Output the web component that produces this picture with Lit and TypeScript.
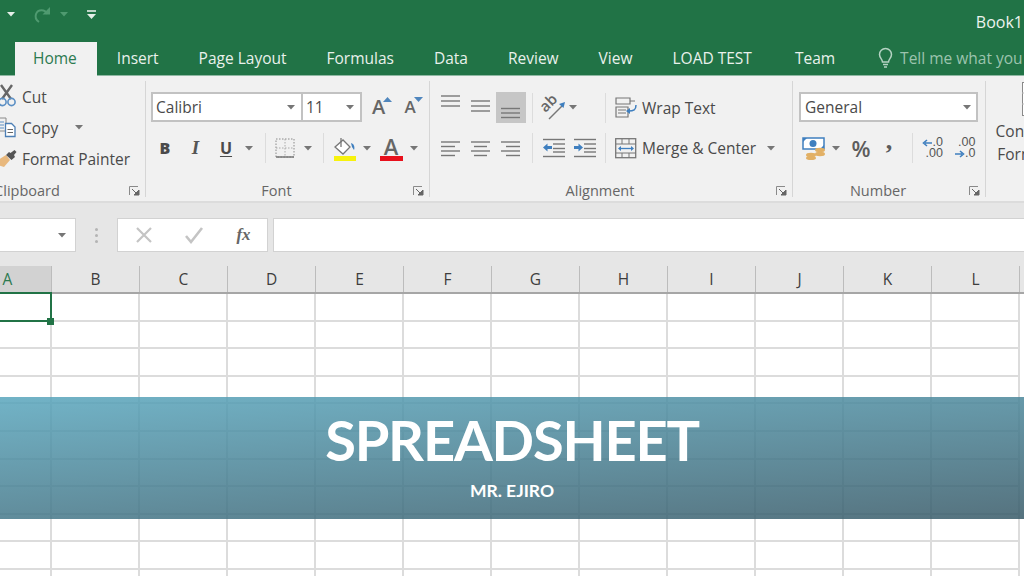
import { LitElement, html, css, svg } from "lit";
import { customElement } from "lit/decorators.js";

const dd = (c = "#767676") => html`<svg class="dd" width="8" height="4.500" viewBox="0 0 9 5"><polygon points="0,0 9,0 4.500,5" fill=${c}></polygon></svg>`;
const lines = (rows: number[][], c = "#777") => rows.map(([x1, y, x2]) => svg`<line x1=${x1} x2=${x2} y1=${y} y2=${y} stroke=${c} stroke-width="1.400"></line>`);
const lineIcon = (rows: number[][]) => html`<svg width="22" height="20" viewBox="0 0 22 20">${lines(rows)}</svg>`;
const launcher = html`<svg class="launch" width="11" height="11" viewBox="0 0 11 11"><path d="M.5 9V.5H9" fill="none" stroke="#8a8a8a"/><path d="M3 3l5 5M5 9h5V4z" fill="#666" stroke="#666"/></svg>`;
const indent = (dir: number) => html`<svg width="24" height="20" viewBox="0 0 24 20">
  ${lines([[1, 1.5, 23], [11, 6, 23], [11, 10.5, 23], [11, 14, 23], [1, 18.5, 23]])}
  <path d=${dir < 0 ? "M1 9.500l4.500-4v2.500H10v3H5.500v2.500z" : "M10 9.500l-4.500-4v2.500H1v3h4.500v2.500z"} fill="#3f7fbf"></path></svg>`;

@customElement("app-root")
export class AppRoot extends LitElement {
  static styles = css`
    :host { display:block; position:relative; width:1024px; height:576px; overflow:hidden; background:#fff;
      font-family:"Open Sans","Noto Sans",sans-serif; color:#4a4a4a; font-size:15.5px; }
    svg { display:block; overflow:visible; }
    .title { height:41px; background:#217346; display:flex; align-items:center; box-sizing:border-box; padding-top:1px; color:#edf3ef; }
    .qat { display:grid; grid-template-columns:21px 34px 18px 36px; justify-items:center; align-items:center; margin-top:-14px; }
    .redo { justify-self:end; margin-right:3px; }
    .book { margin-left:auto; margin-right:1px; padding-top:2px; font-size:16px; white-space:nowrap; }
    .tabs { height:35px; background:#217346; display:flex; align-items:center; color:#e9f1ec; font-size:15.5px; white-space:nowrap; padding-left:15px; border-bottom:1px solid #8fb8a3; box-sizing:border-box; }
    .tab { padding:0 20px; }
    .tab.wide { padding-right:23px; }
    .tab.home { background:#f1f1f1; color:#2c7a50; height:34px; padding:0 20px 0 18px; line-height:33px; align-self:flex-start; margin-top:1px; }
    .tell { display:flex; align-items:center; gap:7px; color:#9cc4ae; margin-left:23px; }
    .ribbon { height:127px; box-sizing:border-box; background:#f1f1f1; border-bottom:2px solid #dcdcdc; display:flex; margin-left:-69px; padding-top:5px; width:1200px; }
    .group { height:116px; display:flex; flex-direction:column; border-right:1px solid #d6d6d6; box-sizing:border-box; flex:none; }
    .clip { width:215px; } .font { width:284px; } .align { width:363px; } .num { width:193px; } .styles { width:102px; border:0; align-items:center; }
    .body { flex:1; min-height:0; }
    .foot { height:12px; display:flex; align-items:center; font-size:14.5px; color:#666; line-height:12px; }
    .foot span { flex:1; text-align:center; }
    .foot i { width:22px; display:block; }
    .launch { margin:0 0 0 6px; }
    .clip .body { padding-left:68px; }
    .cl { height:31px; display:grid; grid-template-columns:18px auto auto; justify-content:start; align-items:center; column-gap:5px; white-space:nowrap; }
    .cl .dd { margin-left:12px; }
    .rows { padding-top:11px; display:flex; flex-direction:column; gap:11px; }
    .r { height:30px; display:grid; align-items:center; justify-items:center; }
    .combo { background:#fff; border:2px solid #c2c2c2; height:30px; width:100%; box-sizing:border-box; display:flex; align-items:center; justify-content:space-between; padding:0 6px 0 3px; font-size:15.5px; line-height:26px; }
    .f1 { grid-template-columns:152px 59px 33px 30px; padding-left:5px; }
    .f1 .combo + .combo { border-left:0; }
    .f2 { grid-template-columns:30px 31px 30px 16px 16px 24px 22px 8px 36px 8px 40px 6px; padding-left:4px; }
    .sep { width:1px; height:30px; background:#dcdcdc; }
    .bt { font-family:"Liberation Serif",serif; font-weight:bold; font-size:19px; color:#555; }
    .b { font-family:"Open Sans",sans-serif; font-weight:800; font-size:16px; }
    .i { font-style:italic; }
    .u { text-decoration:underline; font-family:"Open Sans",sans-serif; font-size:16px; font-weight:700; text-underline-offset:2px; }
    .az { position:relative; font-size:20px; font-weight:600; color:#666; line-height:30px; }
    .az.small { font-size:17px; }
    .az svg { position:absolute; right:-7px; top:5px; }
    .icoA { display:flex; flex-direction:column; align-items:center; font-weight:600; font-size:22px; line-height:22px; color:#666; }
    .bar { width:23px; height:5px; background:#e8101c; margin-top:-1px; }
    .a1 { grid-template-columns:30px 30px 30px 12px 32px 6px 24px 10px auto; padding-left:6px; }
    .a2 { grid-template-columns:30px 30px 30px 12px 32px 30px 10px auto; padding-left:6px; }
    .selbg { background:#c6c6c6; width:30px; height:31px; display:flex; align-items:center; justify-content:center; }
    .lab { justify-self:start; margin-left:5px; display:flex; align-items:center; gap:5px; white-space:nowrap; }
    .lab .dd { margin-left:6px; }
    .n1 { padding-left:6px; grid-template-columns:179px; }
    .n1 .combo { padding-left:4px; padding-right:5px; }
    .n2 { grid-template-columns:24px 20px 30px 26px 20px 21px 44px; padding-left:9px; }
    .pct { font-size:22px; font-weight:600; color:#5c5c5c; }
    .comma { font-family:"Liberation Serif",serif; font-weight:bold; font-size:26px; line-height:16px; color:#5c5c5c; margin-bottom:14px; }
    .dec { font-family:"Liberation Sans",sans-serif; font-size:12.5px; line-height:11px; display:grid; grid-template-columns:10px 11px; color:#555; align-items:center; justify-items:end; }
    .dec span { white-space:nowrap; }
    .st { text-align:center; white-space:nowrap; line-height:23px; margin-top:2px; }
    .big { margin-top:1px; margin-bottom:2px; align-self:flex-start; margin-left:36px; }
    .fbar { height:63px; background:#e6e6e6; display:grid; grid-template-columns:76px 41px 151px 1fr; align-items:center; column-gap:0; padding-top:1px; box-sizing:border-box; }
    .box { background:#fff; border:1px solid #d2d2d2; height:34px; box-sizing:border-box; display:flex; align-items:center; }
    .name { justify-content:flex-end; padding-right:9px; border-left:0; }
    .dots { display:flex; flex-direction:column; align-items:center; gap:3px; }
    .dots b { width:3px; height:3px; background:#b4b4b4; display:block; border-radius:50%; }
    .fx { display:grid; grid-template-columns:51px 50px 49px; justify-items:center; }
    .fxt { font-family:"Liberation Serif",serif; font-style:italic; font-weight:bold; font-size:17px; color:#666; }
    .input { margin-left:5px; border-right:0; }
    .sheet { margin-left:-36px; width:1100px; }
    .hdr { height:28px; background:#e6e6e6; display:grid; grid-template-columns:repeat(12,88px); border-bottom:2px solid #a6a6a6; box-sizing:border-box; }
    .hdr div { text-align:center; border-right:1px solid #bcbcbc; line-height:26px; font-size:15.5px; color:#3d3d3d; box-sizing:border-box; }
    .hdr .on { background:#d2d2d2; color:#2c7a50; text-align:center; }
    .grid { display:grid; grid-template-columns:repeat(12,88px); grid-auto-rows:27.6px; }
    .cell { border-right:2px solid #dcdcdc; border-bottom:2px solid #dcdcdc; box-sizing:border-box; position:relative; }
    .cell.sel::after { content:""; position:absolute; inset:-2px -2px -2px -2px; border:2.5px solid #217346; }
    .cell.sel::before { content:""; position:absolute; right:-4px; bottom:-5px; width:7px; height:7px; background:#217346; z-index:1; }
    .banner { position:absolute; left:0; right:0; top:396.5px; height:122px; display:flex; flex-direction:column; align-items:center; color:#fff;
      background:linear-gradient(175.5deg,rgba(89,166,189,.85),rgba(56,90,104,.85)); font-family:Lato,"Open Sans",sans-serif; }
    .h { font-size:56px; font-weight:700; line-height:78px; margin-top:4px; letter-spacing:-1.2px; white-space:nowrap; }
    .s { font-size:17.5px; font-weight:700; line-height:20px; margin-top:2px; white-space:nowrap; }
  `;

  render() {
    const cols = "ABCDEFGHIJKL".split("");
    const cells = Array.from({ length: 132 }, (_, i) => i);
    return html`
      <div class="title">
        <div class="qat">
          ${dd("#e6efe9")}
          <svg class="redo" width="19" height="17" viewBox="0 0 19 17"><path d="M14 8c-2-5-9-5-11 0-1 3 0 6 3 8" fill="none" stroke="#4f9a70" stroke-width="2"/><path d="M17 1v7.500h-7.500z" fill="#4f9a70"/></svg>
          ${dd("#4f9a70")}
          <svg width="9" height="9" viewBox="0 0 9 9"><path d="M0 1h9" stroke="#e6efe9" stroke-width="1.600"/><polygon points="0,4 9,4 4.500,9" fill="#e6efe9"/></svg>
        </div>
        <div class="book">Book1</div>
      </div>
      <div class="tabs">
        <div class="tab home">Home</div>
        ${["Insert", "Page Layout", "Formulas", "Data", "Review", "View"].map((t) => html`<div class="tab">${t}</div>`)}
        <div class="tab wide">LOAD TEST</div>
        <div class="tab">Team</div>
        <div class="tell">
          <svg width="15" height="21" viewBox="0 0 15 21"><path d="M4.500 14c0-3-3-4-3-7.500a6 6 0 0 1 12 0c0 3.500-3 4.500-3 7.500zM5 16.500h5M6 19h3" fill="none" stroke="#b5d3c3" stroke-width="1.500"/></svg>
          <span>Tell me what you</span>
        </div>
      </div>

      <div class="ribbon">
        <section class="group clip">
          <div class="body">
            <div class="cl">
              <svg width="18" height="22" viewBox="0 0 18 22"><path d="M2 -1l10 14M13 -1L3 13" stroke="#666" stroke-width="2.400"/><circle cx="3.500" cy="16" r="3.600" fill="none" stroke="#5b8fc4" stroke-width="1.600"/><circle cx="12.500" cy="16" r="3.600" fill="none" stroke="#5b8fc4" stroke-width="1.600"/></svg>
              <span>Cut</span>
            </div>
            <div class="cl">
              <svg width="18" height="20" viewBox="0 0 18 20"><path d="M-1 0h8v13H-1z" fill="#f1f1f1" stroke="#8a8a8a"/><path d="M0 4h5M0 7h5M0 10h5" stroke="#5b8fc4"/><path d="M6.500 5.500h6l3.500 3.500v9.500H6.500z" fill="#fff" stroke="#4d7fb5" stroke-width="1.300"/><path d="M8.500 11.500h5.500M8.500 14.500h5.500" stroke="#666"/></svg>
              <span>Copy</span>${dd()}
            </div>
            <div class="cl">
              <svg width="18" height="20" viewBox="0 0 18 20"><path d="M-1 11l8-5 4 5-6 7-6-2z" fill="#e8b87d"/><path d="M7 6l3-3 1.500 1 4-3 2 2-2.500 3 1 2-3.500 3z" fill="#555"/></svg>
              <span>Format Painter</span>
            </div>
          </div>
          <div class="foot"><span>Clipboard</span><i>${launcher}</i></div>
        </section>

        <section class="group font">
          <div class="body rows">
            <div class="r f1">
              <div class="combo"><span>Calibri</span>${dd()}</div>
              <div class="combo"><span>11</span>${dd()}</div>
              <div class="az">A<svg width="9" height="5" viewBox="0 0 9 5"><polygon points="0,5 9,5 4.500,0" fill="#4f86bd"/></svg></div>
              <div class="az small">A<svg width="9" height="5" viewBox="0 0 9 5"><polygon points="0,0 9,0 4.500,5" fill="#4f86bd"/></svg></div>
            </div>
            <div class="r f2">
              <span class="b">B</span><span class="bt i">I</span><span class="u">U</span>${dd()}
              <div class="sep"></div>
              <svg width="20" height="20" viewBox="0 0 20 20"><rect x="1" y="1" width="18" height="18" fill="none" stroke="#8a8a8a" stroke-dasharray="1.500 1.500"/><path d="M10 1v18M1 10h18" stroke="#aaa" stroke-dasharray="1.500 1.500"/><path d="M1 19h18" stroke="#777" stroke-width="1.500"/></svg>
              ${dd()}
              <div class="sep"></div>
              <svg width="24" height="25" viewBox="0 0 24 25"><path d="M2 11l8-7 7 7-7 7z" fill="#fff" stroke="#777" stroke-width="1.300"/><path d="M8 2v9" stroke="#777" stroke-width="1.300"/><path d="M18 7c3 1 4 4 3 7l-2-3z" fill="#3f7fbf"/><rect x="1" y="20" width="22" height="5" fill="#f7f20d"/></svg>
              ${dd()}
              <div class="icoA">A<div class="bar"></div></div>
              ${dd()}
            </div>
          </div>
          <div class="foot"><span>Font</span><i>${launcher}</i></div>
        </section>

        <section class="group align">
          <div class="body rows">
            <div class="r a1">
              ${lineIcon([[1, -2, 20], [1, 3, 20], [1, 8, 20]])}
              ${lineIcon([[1, 3, 20], [1, 8, 20], [1, 13, 20]])}
              <div class="selbg">${lineIcon([[1, 10.5, 20], [1, 15, 20], [1, 19.5, 20]])}</div>
              <div class="sep"></div>
              <svg width="24" height="22" viewBox="0 0 24 22"><text transform="translate(3.500 16) rotate(-45)" font-size="15" font-family="Open Sans" fill="#666" font-weight="600">ab</text><path d="M7 22L20 9" stroke="#777" stroke-width="1.500"/><path d="M23 5l-1.500 6-4.500-4z" fill="#3f7fbf"/></svg>
              ${dd()}
              <span></span>
              <div class="sep"></div>
              <div class="lab">
                <svg width="22" height="21" viewBox="0 0 22 21"><path d="M1 1h14v6H1zM1 10h12v10H1z" fill="none" stroke="#777" stroke-width="1.200"/><path d="M15 4h5M3 13h8M3 16h8" stroke="#777"/><path d="M21 8c0 5-2 6-8 6" fill="none" stroke="#3f7fbf" stroke-width="1.500"/><path d="M15 11l-4 3 4 3z" fill="#3f7fbf"/></svg>
                <span>Wrap Text</span>
              </div>
            </div>
            <div class="r a2">
              ${lineIcon([[1, 4, 20], [1, 8.5, 15], [1, 13, 20], [1, 17.5, 15]])}
              ${lineIcon([[1, 4, 20], [4, 8.5, 17], [1, 13, 20], [4, 17.5, 17]])}
              ${lineIcon([[1, 4, 20], [6, 8.5, 20], [1, 13, 20], [6, 17.5, 20]])}
              <div class="sep"></div>
              ${indent(-1)}${indent(1)}
              <div class="sep"></div>
              <div class="lab">
                <svg width="22" height="21" viewBox="0 0 22 21"><rect x=".7" y=".7" width="20" height="19" fill="none" stroke="#777" stroke-width="1.300"/><path d="M1 6h20M1 15h20M7 1v5M14 1v5M7 15v5M14 15v5" stroke="#777"/><path d="M5 10.500h12" stroke="#3f7fbf" stroke-width="1.300"/><path d="M3 10.500l3-2.500v5zM19 10.500l-3-2.500v5z" fill="#3f7fbf"/></svg>
                <span>Merge &amp; Center</span>${dd()}
              </div>
            </div>
          </div>
          <div class="foot"><span>Alignment</span><i>${launcher}</i></div>
        </section>

        <section class="group num">
          <div class="body rows">
            <div class="r n1"><div class="combo"><span>General</span>${dd()}</div></div>
            <div class="r n2">
              <svg width="24" height="23" viewBox="0 0 24 23"><rect x="1" y="1" width="21" height="11" fill="#fff" stroke="#3f7fbf" stroke-width="1.500"/><circle cx="11" cy="6.500" r="3.500" fill="#3f7fbf"/><path d="M1 1h4L1 5zM22 12h-4l4-4z" fill="#3f7fbf"/><ellipse cx="18" cy="13" rx="5" ry="2.200" fill="#e2b065"/><ellipse cx="18" cy="17" rx="5" ry="2.200" fill="#e2b065"/><ellipse cx="9" cy="18" rx="5" ry="2.200" fill="#e2b065"/><ellipse cx="9" cy="21" rx="5" ry="2" fill="#e2b065"/></svg>
              ${dd()}
              <span class="pct">%</span>
              <span class="comma">,</span>
              <div class="sep"></div>
              <div class="dec">
                <svg width="10" height="8" viewBox="0 0 10 8"><path d="M10 4H3M5 1L1.500 4 5 7" fill="none" stroke="#3f7fbf" stroke-width="1.600"/></svg><span>.0</span>
                <span></span><span>.00</span>
              </div>
              <div class="dec">
                <span></span><span>.00</span>
                <svg width="10" height="8" viewBox="0 0 10 8"><path d="M0 4h7M5 1l3.500 3L5 7" fill="none" stroke="#3f7fbf" stroke-width="1.600"/></svg><span>.0</span>
              </div>
            </div>
          </div>
          <div class="foot"><span>Number</span><i>${launcher}</i></div>
        </section>

        <section class="group styles">
          <svg class="big" width="30" height="34" viewBox="0 0 30 34"><rect x=".5" y=".5" width="29" height="33" fill="#fff" stroke="#8a8a8a"/><path d="M0 11h30M0 22h30" stroke="#bbb"/></svg>
          <div class="st">Conditional<br />Formatting</div>
        </section>
      </div>

      <div class="fbar">
        <div class="box name">${dd()}</div>
        <div class="dots"><b></b><b></b><b></b></div>
        <div class="box fx">
          <svg width="16" height="16" viewBox="0 0 16 16"><path d="M1 1l14 14M15 1L1 15" stroke="#c4c4c4" stroke-width="2.200"/></svg>
          <svg width="18" height="16" viewBox="0 0 18 16"><path d="M1 9l5 6L17 1" fill="none" stroke="#c4c4c4" stroke-width="2.600"/></svg>
          <span class="fxt">fx</span>
        </div>
        <div class="box input"></div>
      </div>

      <div class="sheet">
        <div class="hdr">${cols.map((c, i) => html`<div class=${i === 0 ? "on" : ""}>${c}</div>`)}</div>
        <div class="grid">${cells.map((i) => html`<div class=${i === 0 ? "cell sel" : "cell"}></div>`)}</div>
      </div>

      <div class="banner">
        <div class="h">SPREADSHEET</div>
        <div class="s">MR. EJIRO</div>
      </div>
    `;
  }
}
